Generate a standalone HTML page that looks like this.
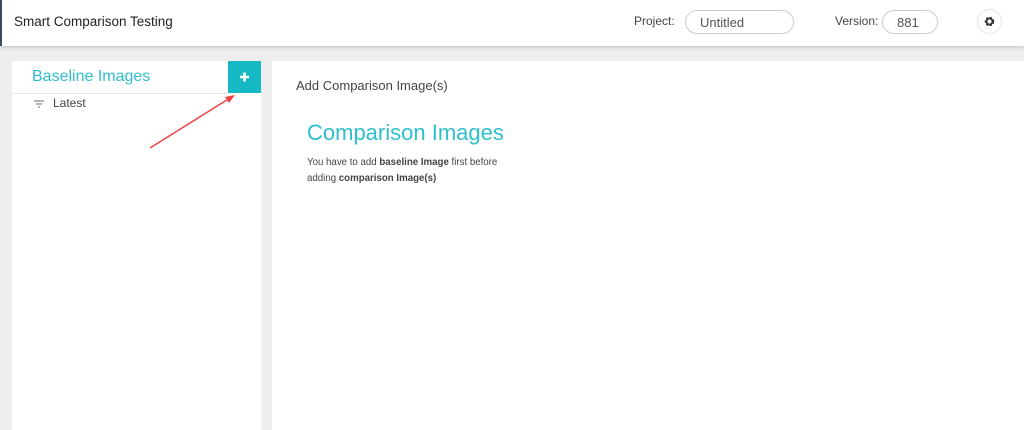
<!DOCTYPE html>
<html><head><style>
body{margin:0;width:1024px;height:430px;overflow:hidden;background:#eeeeee;font-family:"Liberation Sans",sans-serif;position:relative}
.hdr{position:absolute;left:0;top:0;width:1024px;height:46px;background:#fff;border-left:2px solid #3c4a5c;box-sizing:border-box;box-shadow:0 2px 4px rgba(0,0,0,.15)}
.t{position:absolute;left:12px;top:14px;font-size:13.5px;color:#222}
.lbl{position:absolute;top:14px;font-size:12px;color:#444}
.pill{position:absolute;top:10px;height:24px;border:1px solid #ccc;border-radius:13px;box-sizing:border-box;font-size:13px;color:#555;padding:4px 0 0 14px}
.gear{position:absolute;left:975px;top:9px;width:25px;height:25px;border:1px solid #e4e4e4;border-radius:50%;box-sizing:border-box}
.lp{position:absolute;left:12px;top:61px;width:249px;height:369px;background:#fff}
.rp{position:absolute;left:272px;top:61px;width:752px;height:369px;background:#fff}
.plus{position:absolute;left:228px;top:61px;width:33px;height:32px;background:#14b9c4}
</style></head><body>
<div class="hdr">
<div class="t">Smart Comparison Testing</div>
<div class="lbl" style="left:632px">Project:</div>
<div class="pill" style="left:683px;width:109px">Untitled</div>
<div class="lbl" style="left:833px">Version:</div>
<div class="pill" style="left:880px;width:56px">881</div>
<div class="gear"><svg width="23" height="23" viewBox="0 0 23 23"><circle cx="11.5" cy="11.5" r="3.5" fill="none" stroke="#333" stroke-width="2.5" stroke-dasharray="2 1.3"/><circle cx="11.5" cy="11.5" r="3" fill="none" stroke="#333" stroke-width="1.8"/></svg></div>
</div>
<div class="lp">
<div style="position:absolute;left:20px;top:7px;font-size:16px;color:#2fbfcc">Baseline Images</div>
<div style="position:absolute;left:0;top:32px;width:216px;height:1px;background:#e6e6e6"></div>
<svg style="position:absolute;left:21px;top:38px" width="12" height="10"><path d="M1 2h10M3 5h6M5 8h2" stroke="#888" stroke-width="1.2"/></svg>
<div style="position:absolute;left:41px;top:35px;font-size:12px;color:#444">Latest</div>
</div>
<div class="plus"><svg width="33" height="32"><path d="M16.5 11.5v9M12 16h9" stroke="#fff" stroke-width="2.6"/></svg></div>
<div class="rp">
<div style="position:absolute;left:24px;top:17px;font-size:13px;color:#444">Add Comparison Image(s)</div>
<div style="position:absolute;left:35px;top:59px;font-size:22px;color:#2fbfcc">Comparison Images</div>
<div style="position:absolute;left:35px;top:94px;font-size:9.7px;color:#444;line-height:16px">You have to add <b>baseline Image</b> first before<br>adding <b>comparison Image(s)</b></div>
</div>
<svg style="position:absolute;left:0;top:0" width="300" height="200"><line x1="150" y1="148" x2="230" y2="98" stroke="#ee4444" stroke-width="1.5"/><path d="M235 95 L225 97 L229 103 Z" fill="#ee4444"/></svg>
</body></html>
